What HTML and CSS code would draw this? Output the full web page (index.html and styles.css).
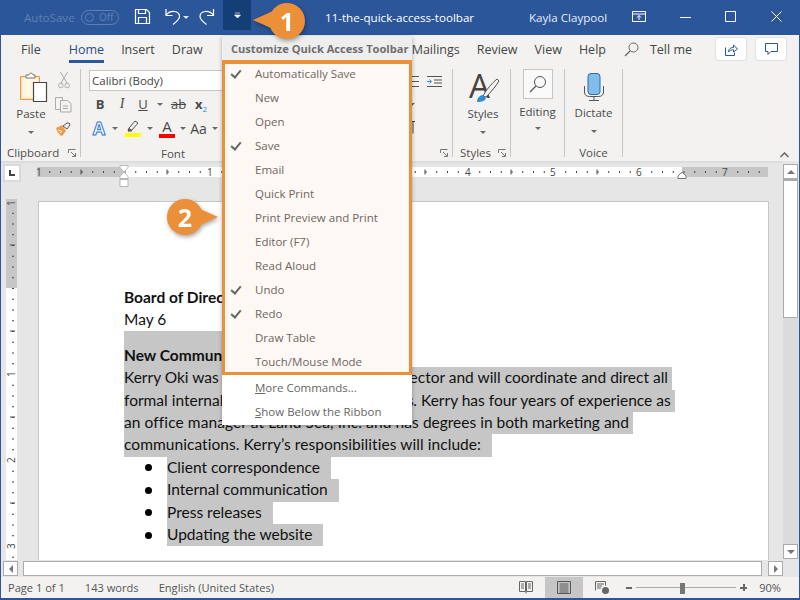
FILE: index.html
```html
<!DOCTYPE html>
<html lang="en">
<head>
<meta charset="utf-8">
<title>11-the-quick-access-toolbar</title>
<link rel="stylesheet" href="styles.css">
</head>
<body>
<div class="win">
  <header class="title">
    <span class="autosave">AutoSave</span>
    <span class="toggle"><i></i><b>Off</b></span>
    <svg class="qa-save" width="17" height="17" viewBox="0 0 17 17"><path d="M1.500 1.500h11l3 3v11h-14zM4.500 1.500v4h7v-4M4.500 15.500v-6h8v6" fill="none" stroke="#fff" stroke-width="1.200"/></svg>
    <svg class="qa-undo" width="17" height="17" viewBox="0 0 17 17"><path d="M2 1v6.500h6.500M2 7.500C6 1.500 15.500 2.500 15.500 8.500c0 2.500-2 4.500-6.500 8" fill="none" stroke="#fff" stroke-width="1.200"/></svg>
    <i class="caret white qa-c"></i>
    <svg class="qa-redo" width="16" height="17" viewBox="0 0 16 17"><path d="M14.500 1v6.500H8M14.500 7.500C10.500 1.500 1 2.500 1 8.500c0 2.500 2 4.500 6.500 8" fill="none" stroke="#fff" stroke-width="1.200"/></svg>
    <span class="custom"><svg width="7" height="7" viewBox="0 0 7 7"><path d="M1 1h5M.5 3h6L3.500 6z" fill="#fff" stroke="#fff" stroke-width=".6"/></svg></span>
    <span class="docname">11-the-quick-access-toolbar</span>
    <span class="user">Kayla Claypool</span>
    <svg class="t-disp" width="14" height="11" viewBox="0 0 14 11"><path d="M.5.500h13v10H.5zM.5 3h13M7 9V4.500M5 6.500l2-2 2 2" fill="none" stroke="#fff"/></svg>
    <svg class="t-min" width="11" height="1" viewBox="0 0 11 1"><path d="M0 .5h11" stroke="#fff"/></svg>
    <svg class="t-max" width="11" height="11" viewBox="0 0 11 11"><path d="M.5.500h10v10H.5z" fill="none" stroke="#fff"/></svg>
    <svg class="t-close" width="11" height="11" viewBox="0 0 11 11"><path d="M.5.500l10 10M10.500.500l-10 10" stroke="#fff"/></svg>
  </header>

  <nav class="tabs">
    <span class="t-file">File</span><span class="on">Home</span><span>Insert</span><span>Draw</span><span class="t-gap"></span><span>Mailings</span><span>Review</span><span>View</span><span>Help</span>
    <svg class="tell-i" width="15" height="15" viewBox="0 0 15 15"><circle cx="9.500" cy="5.500" r="4.500" fill="none" stroke="#666"/><path d="M6 9l-5 5" stroke="#666" stroke-width="1.200"/></svg>
    <span class="tell">Tell me</span>
    <span class="tbtn share"><svg width="13" height="13" viewBox="0 0 13 13"><path d="M.5 4.500v8h9v-3M3.500 9c0-3 2-4.500 5-4.500V2l4 4-4 3V6.800c-2 0-4 .7-5 2.200z" fill="none" stroke="#2b579a"/></svg></span>
    <span class="tbtn"><svg width="13" height="12" viewBox="0 0 13 12"><path d="M.5.500h12v8H6l-3 3v-3H.5z" fill="none" stroke="#2b579a"/></svg></span>
  </nav>

  <section class="ribbon">
    <div class="group g-clip">
      <div class="body cliprow">
        <div class="big">
          <svg class="ic-paste" width="28" height="31" viewBox="0 0 28 31"><path d="M.5 4.500h19v23H.5z" fill="#fce4bd" stroke="#e99a3c"/><path d="M2.500 6.500h15v19h-15z" fill="#fff6e6"/><path d="M6 4.500V3h3c0-2.500 4-2.500 4 0h2v3H6z" fill="#fff" stroke="#777"/><path d="M13.500 10.500h13v19h-13z" fill="#fff" stroke="#444" stroke-width="1.200"/></svg>
          <span>Paste</span>
          <i class="caret"></i>
        </div>
        <div class="smalls">
          <svg width="12" height="17" viewBox="0 0 12 17"><path d="M2.500 0l6.500 11M9.500 0L3 11" stroke="#aaa"/><circle cx="2.800" cy="13.500" r="2.300" fill="none" stroke="#aaa"/><circle cx="9.200" cy="13.500" r="2.300" fill="none" stroke="#aaa"/></svg>
          <svg width="17" height="16" viewBox="0 0 17 16"><path d="M.5.500h7v12h-7z" fill="none" stroke="#aaa"/><path d="M5.500 3.500h7l3.500 3v8.500H5.500z" fill="#f3f2f1" stroke="#aaa"/><path d="M8 9h5M8 11.500h5" stroke="#aaa"/></svg>
          <svg width="17" height="16" viewBox="0 0 17 16"><path d="M1 7l6-3 4 6-4 5c-2 0-5-4-6-8z" fill="#f29a45"/><path d="M3 9l3 1M5 12l2-2" stroke="#fff"/><path d="M8 5l4-3 2 0 1 2-3 4z" fill="#f3f2f1" stroke="#555"/></svg>
        </div>
      </div>
      <div class="glabel split clipl"><span>Clipboard</span><svg class="launch" width="8" height="8" viewBox="0 0 8 8"><path d="M.5 4V.5H7.500M3 3l4 4M7.500 4v3.500H4" fill="none" stroke="#777"/></svg></div>
    </div>

    <div class="group g-font">
      <div class="body frows">
        <div class="fontbox">Calibri (Body)</div>
        <div class="frow r2">
          <b class="fc w22 fb">B</b><i class="fc w22 fi">I</i><u class="fc w20">U</u><span class="fc w14"><i class="caret"></i></span><s class="fc w23">ab</s><span class="fc w22 sub"><b>x</b><em>2</em></span>
        </div>
        <div class="frow r3">
          <span class="fc w20 ta">A</span><span class="fc w12"><i class="caret"></i></span>
          <span class="fc w24 col"><svg width="14" height="12" viewBox="0 0 14 12"><path d="M2 11l1-3 6-7 3 2-6 7zM2 11h4" fill="#f3f2f1" stroke="#555"/><path d="M2 11l1-3 3 2z" fill="#555"/></svg><i class="bar yellow"></i></span><span class="fc w10"><i class="caret"></i></span>
          <span class="fc w24 col fa">A<i class="bar red"></i></span><span class="fc w8"><i class="caret"></i></span>
          <span class="fc w23 aa">Aa</span><span class="fc w10"><i class="caret"></i></span>
        </div>
      </div>
      <div class="glabel fontl"><span>Font</span></div>
    </div>

    <div class="group g-para">
      <div class="body prows">
        <div class="prow p1">
          <svg width="9" height="11" viewBox="0 0 9 11"><path d="M0 .5h9M0 5.500h9M0 10.500h9" stroke="#555"/></svg>
          <svg width="15" height="11" viewBox="0 0 15 11"><path d="M0 .5h15M7 4h8M7 7h8M0 10.500h15" stroke="#555"/><path d="M0 5.500h4M2.500 3.500l2 2-2 2" fill="none" stroke="#2e8bd6"/></svg>
        </div>
        <div class="prow p2"><i class="caret"></i></div>
        <div class="prow p3"><svg width="4" height="13" viewBox="0 0 4 13"><path d="M0 .5h4M2 .5v12" stroke="#444"/></svg></div>
      </div>
      <div class="glabel end"><svg class="launch" width="8" height="8" viewBox="0 0 8 8"><path d="M.5 4V.5H7.500M3 3l4 4M7.500 4v3.500H4" fill="none" stroke="#777"/></svg></div>
    </div>

    <div class="group g-styles">
      <div class="body big">
        <svg class="ic-big" width="31" height="29" viewBox="0 0 31 29"><text x="0" y="24" class="bigA">A</text><path d="M14 22c3-6 9-13 14-17l2 2c-3 5-8 11-13 16z" fill="#f3f2f1" stroke="#555"/><path d="M8 28c0-4 3-7 6-7l3 3c-1 3-4 4-9 4z" fill="#2e8bd6"/></svg>
        <span>Styles</span>
        <i class="caret"></i>
      </div>
      <div class="glabel split"><span>Styles</span><svg class="launch" width="8" height="8" viewBox="0 0 8 8"><path d="M.5 4V.5H7.500M3 3l4 4M7.500 4v3.500H4" fill="none" stroke="#777"/></svg></div>
    </div>

    <div class="group g-edit">
      <div class="body big tight">
        <span class="editbox"><svg width="18" height="18" viewBox="0 0 18 18"><circle cx="11" cy="7" r="5.500" fill="none" stroke="#555"/><path d="M7 11l-6 6" stroke="#555" stroke-width="1.300"/></svg></span>
        <span>Editing</span>
        <i class="caret"></i>
      </div>
    </div>

    <div class="group g-dict">
      <div class="body big">
        <svg class="ic-mic" width="20" height="29" viewBox="0 0 20 29"><rect x="4" y=".5" width="12" height="21" rx="3" fill="#83bbeb" stroke="#1f6fb5"/><path d="M.5 13v6c0 3 2 4.500 5 4.500h9c3 0 5-1.500 5-4.500v-6M10 23.500v4M5 27.500h10" fill="none" stroke="#555"/></svg>
        <span>Dictate</span>
        <i class="caret"></i>
      </div>
      <div class="glabel center"><span>Voice</span></div>
    </div>

    <svg class="collapse" width="9" height="6" viewBox="0 0 9 6"><path d="M.5 5l4-4 4 4" fill="none" stroke="#666" stroke-width="1.500"/></svg>
  </section>

  <main class="main">
    <div class="workspace">
      <div class="rulerrow">
        <span class="tabstop"><i></i></span>
        <svg class="hruler" width="731" height="24" viewBox="0 0 731 24">
          <rect y="3" width="87" height="10" fill="#c6c6c6"/><rect x="87" y="3" width="558" height="10" fill="#fff"/><rect x="645" y="3" width="86" height="10" fill="#c6c6c6"/>
          <path d="M1.500 8H731" stroke="#444" stroke-width="2" stroke-dasharray="1 9.750"/>
          <path d="M44 5.500v5M130 5.500v5M216 5.500v5M302 5.500v5M388 5.500v5M474 5.500v5M560 5.500v5" stroke="#444"/>
          <g class="rn">
            <rect x="0" y="3" width="6" height="10" fill="#c6c6c6"/><text x="-1" y="12">1</text>
            <rect x="170" y="3" width="7" height="10" fill="#fff"/><text x="170" y="12">1</text>
            <rect x="256" y="3" width="7" height="10" fill="#fff"/><text x="256" y="12">2</text>
            <rect x="342" y="3" width="7" height="10" fill="#fff"/><text x="342" y="12">3</text>
            <rect x="428" y="3" width="7" height="10" fill="#fff"/><text x="428" y="12">4</text>
            <rect x="513" y="3" width="7" height="10" fill="#fff"/><text x="513" y="12">5</text>
            <rect x="599" y="3" width="7" height="10" fill="#fff"/><text x="599" y="12">6</text>
            <rect x="685" y="3" width="7" height="10" fill="#c6c6c6"/><text x="685" y="12">7</text>
          </g>
          <path d="M83 1.500h8v2l-4 4.500-4-4.500zM83 14.500h8v-2l-4-4.500-4 4.500z" fill="#fff" stroke="#aaa" stroke-width=".8"/>
          <rect x="83" y="15.500" width="8" height="7" fill="#fff" stroke="#aaa" stroke-width=".8"/>
          <path d="M645 8l4 4v2.500h-8V12z" fill="#fff" stroke="#777"/>
        </svg>
      </div>
      <div class="docrow">
        <svg class="vruler" width="11" height="361" viewBox="0 0 11 361">
          <rect width="11" height="89" fill="#c6c6c6"/><rect y="89" width="11" height="272" fill="#fff"/>
          <path d="M7 13.750V361" stroke="#444" stroke-width="2" stroke-dasharray="1 9.750"/>
          <path d="M4 46h5M4 132h5M4 218h5M4 304h5" stroke="#444"/>
          <g class="rn">
            <g transform="translate(9 6) rotate(-90)"><rect x="-2" y="-8" width="8" height="9" fill="#c6c6c6"/><text x="-1" y="0">1</text></g>
            <g transform="translate(9 175) rotate(-90)"><rect x="-3" y="-8" width="8" height="9" fill="#fff"/><text x="-3" y="0">1</text></g>
            <g transform="translate(9 261) rotate(-90)"><rect x="-3" y="-8" width="8" height="9" fill="#fff"/><text x="-3" y="0">2</text></g>
            <g transform="translate(9 347) rotate(-90)"><rect x="-3" y="-8" width="8" height="9" fill="#fff"/><text x="-3" y="0">3</text></g>
          </g>
        </svg>
        <article class="page">
          <p class="ln"><b>Board of Directors</b></p>
          <p class="ln">May 6</p>
          <div class="selgap"></div>
          <p class="ln"><span class="sel"><b>New Communications</b></span></p>
          <p class="ln"><span class="sel">Kerry Oki was <span class="sq1">hired as Communications Dir</span>ector and will coordinate and direct all </span></p>
          <p class="ln"><span class="sel">formal interna<span class="sq">l and external communications</span>. Kerry has four years of experience as </span></p>
          <p class="ln"><span class="sel"><span class="sp">an office manager at Land Sea, Inc. and has </span>degrees in both marketing and </span></p>
          <p class="ln"><span class="sel pad sp2">communications. Kerry’s responsibilities will include: </span></p>
          <ul class="bl">
            <li><span class="sel pad">Client correspondence </span></li>
            <li><span class="sel pad">Internal communication </span></li>
            <li><span class="sel pad">Press releases </span></li>
            <li><span class="sel pad">Updating the website </span></li>
          </ul>
        </article>
      </div>
    </div>
    <div class="vscroll">
      <span class="sbtn"><i class="caret up"></i></span>
      <span class="vthumb"></span>
      <span class="vfill"></span>
      <span class="sbtn"><i class="caret"></i></span>
    </div>
  </main>

  <div class="hscroll">
    <span class="hbtn"><i class="tri left"></i></span>
    <span class="hthumb"></span>
    <span class="hbtn"><i class="tri right"></i></span>
  </div>

  <footer class="status">
    <span>Page 1 of 1</span><span>143 words</span><span>English (United States)</span>
    <span class="stsp"></span>
    <svg class="v-read" width="14" height="13" viewBox="0 0 14 13"><path d="M.5.500h6v10h-6zM7.500.500h6v10h-6zM2 3h3M2 5h3M2 7h3M9 3h3M9 5h3M9 7h3M7 10.500v2" fill="none" stroke="#666"/></svg>
    <span class="v-print"><svg width="14" height="13" viewBox="0 0 14 13"><path d="M.5.500h13v12H.5zM2.500 3h9M2.500 5h9M2.500 7h9M2.500 9h9M2.500 11h9" fill="none" stroke="#555"/></svg></span>
    <svg class="v-web" width="14" height="13" viewBox="0 0 14 13"><path d="M.5 9.500V.5h10v4M2 3h7M2 5h5M2 7h4" fill="none" stroke="#666"/><circle cx="10.500" cy="9.500" r="3.500" fill="#666"/></svg>
    <i class="zm"></i>
    <span class="slider"><i class="tk"></i><i class="th"></i></span>
    <span class="zp"></span>
    <span class="pct">90%</span>
  </footer>

  <div class="menu">
    <div class="mhead">Customize Quick Access Toolbar</div>
    <div class="hl">
      <ul class="mlist">
        <li class="chk">Automatically Save</li>
        <li>New</li>
        <li>Open</li>
        <li class="chk">Save</li>
        <li>Email</li>
        <li>Quick Print</li>
        <li>Print Preview and Print</li>
        <li>Editor (F7)</li>
        <li>Read Aloud</li>
        <li class="chk">Undo</li>
        <li class="chk">Redo</li>
        <li>Draw Table</li>
        <li>Touch/Mouse Mode</li>
      </ul>
    </div>
    <ul class="mlist after">
      <li><u>M</u>ore Commands...</li>
      <li><u>S</u>how Below the Ribbon</li>
    </ul>
  </div>

  <div class="callout c1"><svg width="54" height="40" viewBox="0 0 54 40"><path d="M0 19L20 10V28z" fill="#ec8f39"/><circle cx="34" cy="20" r="18" fill="#ec8f39"/></svg><b>1</b></div>
  <div class="callout c2"><svg width="54" height="40" viewBox="0 0 54 40"><path d="M52 20L32 11V29z" fill="#ec8f39"/><circle cx="19" cy="20" r="18" fill="#ec8f39"/></svg><b>2</b></div>
</div>
</body>
</html>
```

FILE: styles.css
```css
* { box-sizing: border-box; }
html, body { margin: 0; padding: 0; }
body { width: 800px; height: 600px; overflow: hidden; font-family: "Open Sans", "Noto Sans", sans-serif; font-size: 11.5px; color: #4a4a4a; }
p, ul { margin: 0; padding: 0; list-style: none; }
.win { position: relative; width: 800px; height: 600px; display: flex; flex-direction: column; border: 1px solid #2b579a; border-width: 0 1px 2px; overflow: hidden; background: #f3f2f1; }

.caret { display: block; width: 0; height: 0; border: 3px solid transparent; border-top-color: #6a6a6a; border-bottom-width: 0; }
.caret.up { border-top-width: 0; border-bottom: 4px solid #777; border-left-width: 4px; border-right-width: 4px; }
.sbtn .caret:not(.up) { border-width: 4px 4px 0; border-top-color: #777; }
.caret.white { border-top-color: #dfe7f3; }

.title { height: 35px; flex: none; display: flex; align-items: center; background: #2b579a; color: #fff; font-size: 11.600px; }
.autosave { margin-left: 23px; color: #5e80b6; width: 57px; white-space: nowrap; }
.toggle { width: 38px; height: 15px; border: 1px solid #5e80b6; border-radius: 8px; display: flex; align-items: center; color: #5e80b6; font-size: 10px; margin-top: -1px; }
.toggle i { width: 9px; height: 9px; border-radius: 50%; border: 1px solid #5e80b6; margin: 0 5px 0 3px; }
.toggle b { font-weight: 400; }
.qa-save { margin-left: 15px; margin-top: -2px; }
.qa-undo { margin-left: 13px; margin-top: -2px; }
.qa-c { margin-left: 2px; }
.qa-redo { margin-left: 10px; margin-top: -2px; }
.custom { width: 28px; height: 30px; margin-left: 8px; margin-top: -5px; background: #143f76; display: flex; align-items: center; justify-content: center; }
.docname { margin-left: 74px; width: 204px; white-space: nowrap; }
.user { width: 103px; white-space: nowrap; color: #e6ecf5; }
.t-disp { margin-top: -2px; }
.t-min { margin-left: 34px; }
.t-max { margin-left: 34px; margin-top: -2px; }
.t-close { margin-left: 35px; margin-top: -2px; }

.tabs { height: 28px; flex: none; display: flex; align-items: center; gap: 17px; padding-left: 20px; font-size: 12.500px; color: #444; background: #f3f2f1; white-space: nowrap; }
.t-file { margin-right: 11px; }
.t-gap { width: 175px; }
.tabs .on { height: 28px; line-height: 30px; position: relative; color: #2a4f85; }
.tabs .on::after { content: ""; position: absolute; left: 0; right: 0; bottom: 0; height: 3px; background: #2b579a; }
.tell-i { margin-left: 1px; }
.tell { margin-left: -6px; }
.tbtn { width: 32px; height: 24px; background: #fff; border: 1px solid #e0e0e0; border-radius: 3px; display: flex; align-items: center; justify-content: center; margin-left: -9px; }
.tbtn.share { margin-left: 6px; }

.ribbon { height: 98px; flex: none; display: flex; padding-top: 6px; position: relative; background: #f3f2f1; }
.group { height: 88px; border-right: 1px solid #c6c6c6; flex: none; }
.group .body { height: 76px; }
.g-clip { width: 80px; }
.g-font { width: 186px; }
.g-para { width: 186px; }
.g-styles { width: 58px; }
.g-edit { width: 54px; }
.g-dict { width: 58px; }
.glabel { height: 16px; display: flex; align-items: center; line-height: 16px; white-space: nowrap; color: #4f4f4f; }
.glabel.end { justify-content: flex-end; padding-right: 4px; }
.glabel.center { justify-content: center; }
.glabel.split { justify-content: space-between; padding: 0 4px 0 7px; }
.glabel.clipl { padding-left: 6px; }
.glabel.fontl { padding-left: 80px; }

.big { display: flex; flex-direction: column; align-items: center; }
.big span { line-height: 16px; margin-top: 3px; }
.big .caret { margin-top: 9px; }
.big.tight .caret { margin-top: 7px; }
.big.tight span:nth-child(2) { margin-top: 5px; }
.ic-paste { margin-left: 6px; margin-top: 3px; display: block; }
.ic-big { display: block; margin-top: 5px; margin-left: 2px; overflow: visible; }
.g-styles .big { padding-left: 3px; }
.ic-mic { display: block; margin-top: 4px; }
.bigA { font: 400 33px "Open Sans", sans-serif; fill: #444; }
.editbox { width: 30px; height: 30px; margin: 0 !important; background: #f9f9f9; border: 1px solid #c6c6c6; display: flex; align-items: center; justify-content: center; }

.cliprow { display: flex; padding-left: 13px; }
.smalls { display: flex; flex-direction: column; align-items: center; width: 17px; margin-left: 7px; margin-top: 3px; gap: 8px; }
.smalls svg { display: block; }

.frows { padding-left: 8px; }
.fontbox { height: 21px; width: 170px; margin-top: 1px; background: #fff; border: 1px solid #c6c6c6; padding-left: 2px; line-height: 19px; color: #444; font-size: 11.5px; white-space: nowrap; }
.frow { display: flex; align-items: center; }
.r2 { height: 24px; margin-top: 1px; }
.r3 { height: 24px; }
.fc { display: flex; align-items: center; justify-content: center; font-style: normal; flex: none; }
.w8 { width: 8px; } .w10 { width: 10px; } .w12 { width: 12px; } .w14 { width: 14px; } .w20 { width: 20px; } .w22 { width: 22px; } .w23 { width: 23px; } .w24 { width: 24px; }
.fb { font-size: 13px; }
.fi { font: italic 14px "Liberation Serif", serif; }
.r2 u { font-size: 13px; }
.r2 s { font-size: 13px; }
.sub b { font-size: 13px; }
.sub em { font-style: normal; font-size: 8px; color: #2e8bd6; margin-top: 8px; }
.ta { font-size: 18px; font-weight: 700; color: #fff; -webkit-text-stroke: 1px #2e7bc8; }
.col { flex-direction: column; line-height: 14px; }
.fa { font-size: 15px; }
.aa { font-size: 14px; }
.bar { display: block; width: 16px; height: 4px; margin-top: 1px; }
.bar.yellow { background: #ffff00; }
.bar.red { background: #ff0000; }

.prows { display: flex; flex-direction: column; align-items: flex-end; padding-right: 10px; }
.prow { display: flex; align-items: center; }
.p1 { gap: 8px; margin-top: 7px; }
.p2 { margin-top: 16px; margin-right: 27px; }
.p3 { margin-top: 15px; margin-right: 27px; }

.collapse { position: absolute; right: 10px; bottom: 3px; }

.main { height: 399px; flex: none; display: flex; }
.workspace { width: 782px; background: linear-gradient(#d8d8d8, #e6e6e6 3px); display: flex; flex-direction: column; }
.rulerrow { height: 38px; flex: none; display: flex; align-items: flex-start; padding-top: 3px; }
.tabstop { width: 14px; height: 14px; margin: 2px 0 0 4px; background: #fff; box-shadow: 0 0 0 2px #dadada; display: flex; align-items: center; justify-content: center; flex: none; }
.tabstop i { width: 6px; height: 6px; border-left: 2px solid #444; border-bottom: 2px solid #444; }
.hruler { margin-left: 18px; flex: none; overflow: visible; }
.rn text { font: 400 10px "Open Sans", sans-serif; fill: #444; }
.docrow { height: 361px; display: flex; overflow: hidden; align-items: flex-start; }
.vruler { margin-left: 5px; flex: none; display: block; overflow: visible; }
.page { margin: 2px 0 0 21px; width: 731px; height: 400px; background: #fff; border: 1px solid #c6c6c6; border-width: 1px 1px 0; padding: 84px 0 0 85px; font-family: Lato, "Open Sans", sans-serif; font-size: 15.500px; line-height: 22.400px; color: #111; white-space: nowrap; }
.sel { background: #c6c6c6; display: block; width: fit-content; height: 22.400px; line-height: 21px; white-space: pre; }
.sel span { display: inline; }
.sq { letter-spacing: -.45px; }
.sq1 { letter-spacing: -.33px; }
.sp { letter-spacing: .09px; }
.sp2 { letter-spacing: .06px; }
.pad { padding-right: 7px; }
.selgap { height: 14px; width: 120px; background: #c6c6c6; }
.bl li { display: flex; align-items: center; padding-left: 21px; height: 22.400px; }
.bl li::before { content: ""; width: 7px; height: 7px; border-radius: 50%; background: #000; margin-right: 15px; }

.vscroll { flex: none; width: 16px; display: flex; flex-direction: column; padding-top: 3px; background: #e6e6e6; }
.sbtn { width: 15px; height: 15px; flex: none; background: #fff; border: 1px solid #ababab; display: flex; align-items: center; justify-content: center; }
.vthumb { height: 139px; width: 15px; background: #fff; border: 1px solid #ababab; border-top-width: 2px; flex: none; }
.vfill { height: 226px; background: #dbdbdb; flex: none; }

.hscroll { height: 17px; flex: none; display: flex; align-items: center; background: #e6e6e6; padding-left: 2px; }
.hbtn { width: 15px; height: 15px; background: #fff; border: 1px solid #ababab; display: flex; align-items: center; justify-content: center; flex: none; }
.hthumb { width: 739px; height: 15px; margin: 0 6px 0 5px; background: #fff; border: 1px solid #ababab; flex: none; }
.tri { width: 0; height: 0; border: 4px solid transparent; }
.tri.left { border-right: 4px solid #777; border-left-width: 0; }
.tri.right { border-left: 4px solid #777; border-right-width: 0; }

.status { height: 21px; flex: none; display: flex; align-items: center; background: #f3f2f1; padding-left: 7px; gap: 20px; color: #555; white-space: nowrap; font-size: 11.100px; }
.stsp { flex: 1; }
.v-print { width: 38px; height: 21px; background: #c6c6c6; display: flex; align-items: center; justify-content: center; margin: 0 -8px; }
.zm { width: 6px; height: 2px; background: #666; margin-left: -3px; }
.slider { width: 100px; height: 10px; position: relative; margin: 0 -16px; }
.slider .tk { position: absolute; left: 0; right: 0; top: 4px; height: 1px; background: #aaa; }
.slider .th { position: absolute; left: 44px; top: 0; width: 5px; height: 11px; background: #777; }
.zp { width: 7px; height: 7px; background: linear-gradient(#666, #666) center/7px 2px no-repeat, linear-gradient(#666, #666) center/2px 7px no-repeat; }
.pct { margin: 0 18px 0 -8px; }

.menu { position: absolute; left: 221px; top: 36px; width: 190px; height: 389px; background: #fff; box-shadow: 0 1px 4px rgba(0,0,0,.3); }
.mhead { height: 24px; line-height: 25px; background: #eeeeee; padding-left: 9px; font-weight: 700; color: #6e6e6e; white-space: nowrap; font-size: 11.100px; }
.hl { height: 315px; border: 3px solid #ec8f39; border-top-width: 4px; background: #fef8f4; margin: 0; position: relative; }
.mlist li { height: 24px; line-height: 24px; padding-left: 33px; color: #6f6662; position: relative; white-space: nowrap; }
.hl .mlist { margin-top: -2px; }
.hl .mlist li { padding-left: 30px; }
.mlist.after li { color: #666; padding-left: 33px; }
.mlist.after { margin-top: 1px; }
.chk::before { content: ""; position: absolute; left: 6px; top: 8px; width: 8px; height: 4px; border-left: 2px solid #666; border-bottom: 2px solid #666; transform: rotate(-50deg); }

.callout { position: absolute; width: 54px; height: 40px; filter: drop-shadow(1px 2px 2px rgba(0,0,0,.35)); }
.callout svg { display: block; }
.callout b { position: absolute; top: 0; line-height: 40px; width: 36px; text-align: center; color: #fff; font: 700 25px/40px "Open Sans", sans-serif; }
.c1 { left: 252px; top: 1px; }
.c1 b { left: 16px; }
.c2 { left: 165px; top: 197px; }
.c2 b { left: 1px; }
```
